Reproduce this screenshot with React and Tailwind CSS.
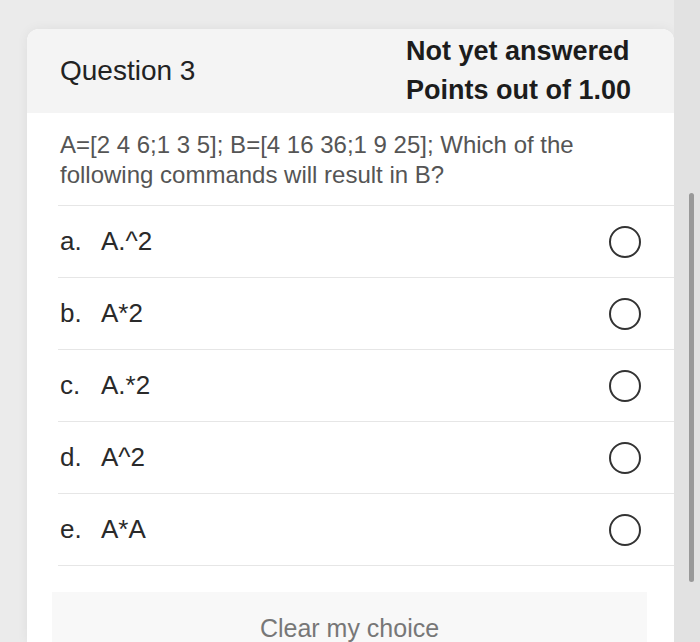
import React from 'react';

const options = [
  { key: 'a.', text: 'A.^2' },
  { key: 'b.', text: 'A*2' },
  { key: 'c.', text: 'A.*2' },
  { key: 'd.', text: 'A^2' },
  { key: 'e.', text: 'A*A' },
];

const App = () => {
  return (
    <div
      className="relative w-[700px] h-[642px] overflow-hidden bg-[#ebebeb] flex"
      style={{ fontFamily: '"Liberation Sans", Arial, sans-serif' }}
    >
      <div className="ml-[27px] mt-[29px] w-[647px] flex flex-col rounded-t-[12px] bg-white shadow-[0_0_12px_rgba(0,0,0,0.06)] overflow-hidden">
        {/* header */}
        <div className="h-[84px] shrink-0 bg-[#f4f4f4] flex items-center justify-between pl-[33px] pr-[43px]">
          <span className="text-[28px] text-[#222]">Question 3</span>
          <div className="flex flex-col font-bold text-[27px] leading-[39px] text-[#1c1c1c]">
            <span>Not yet answered</span>
            <span>Points out of 1.00</span>
          </div>
        </div>

        {/* question */}
        <div className="pl-[33px] pr-[70px] pt-[17px] pb-[15px] text-[24px] leading-[30px] text-[#555]">
          A=[2 4 6;1 3 5]; B=[4 16 36;1 9 25]; Which of the following commands will result in B?
        </div>

        <div className="ml-[31px] flex flex-col">
          {options.map((o) => (
            <div
              key={o.key}
              className="h-[72px] border-t border-[#e6e6e6] flex items-center justify-between pr-[33px]"
            >
              <div className="flex items-center text-[26px] text-[#2a2a2a] pl-[2px]">
                <span className="w-[41px]">{o.key}</span>
                <span>{o.text}</span>
              </div>
              <div className="w-[32px] h-[32px] rounded-full border-2 border-[#333]" />
            </div>
          ))}
          <div className="border-t border-[#e6e6e6]" />
        </div>

        <div className="mt-[26px] ml-[25px] w-[595px] h-[70px] bg-[#f8f8f8] flex justify-center pt-[20px]">
          <span className="text-[25px] leading-[32px] text-[#777]">Clear my choice</span>
        </div>
      </div>

      {/* right strip + scrollbar */}
      <div className="flex-1 bg-[#e2e2e2] relative">
        <div className="absolute left-[15px] top-[193px] w-[5px] h-[389px] rounded-full bg-[#999]" />
      </div>
    </div>
  );
};

export default App;
